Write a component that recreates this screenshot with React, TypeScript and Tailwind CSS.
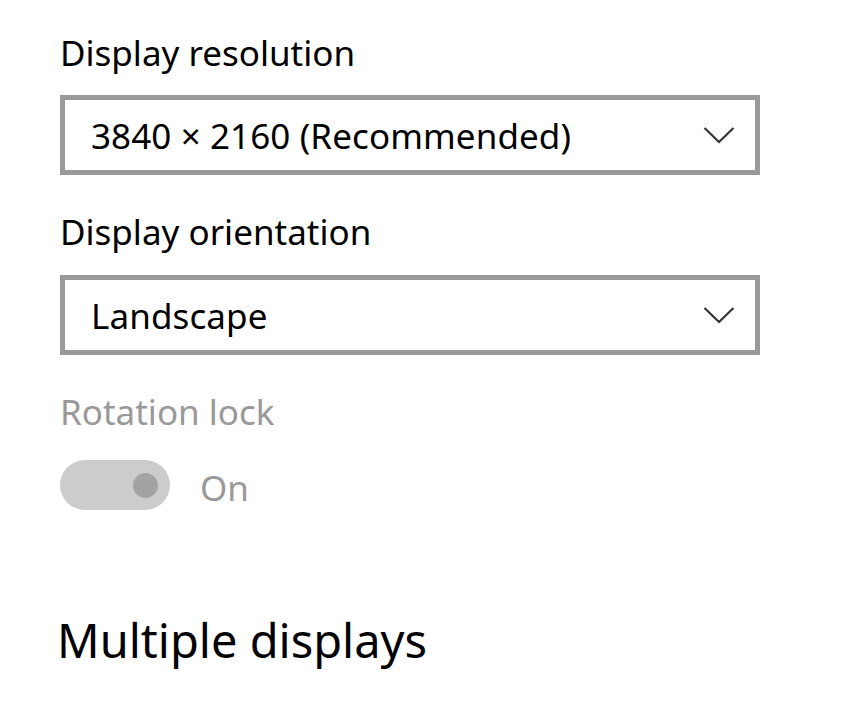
import { useState } from 'react';

const font = { fontFamily: '"Noto Sans", "Open Sans", sans-serif' };

function Chevron() {
  return (
    <svg width="32" height="18" viewBox="0 0 32 18" fill="none" className="shrink-0">
      <path d="M1.5 2 L16 16 L30.5 2" stroke="#333" strokeWidth="2.2" />
    </svg>
  );
}

function Dropdown({ value }: { value: string }) {
  return (
    <div className="flex h-[80px] w-[700px] items-center justify-between border-[5px] border-[#999999] bg-white pl-[26px] pr-[20px]">
      <span className="mt-[2px] text-[35px] leading-[48px] tracking-[0.1px] text-black">{value}</span>
      <Chevron />
    </div>
  );
}

export default function App() {
  const [locked, setLocked] = useState(true);

  return (
    <div className="min-h-[709px] w-[862px] bg-white" style={font}>
      <div className="flex flex-col pl-[60px] pt-[29px]">
        <h3 className="text-[35px] leading-[48px] text-black">Display resolution</h3>
        <div className="mt-[18px]">
          <Dropdown value="3840 × 2160 (Recommended)" />
        </div>

        <h3 className="mt-[33px] text-[35px] leading-[48px] text-black">Display orientation</h3>
        <div className="mt-[19px]">
          <Dropdown value="Landscape" />
        </div>

        <p className="mt-[33px] text-[35px] leading-[48px] text-[#999999]">Rotation lock</p>
        <div className="mt-[22px] flex items-center gap-[30px]">
          <button
            disabled
            onClick={() => setLocked(!locked)}
            className="flex h-[50px] w-[110px] items-center justify-end rounded-full bg-[#cccccc] pr-[12px]"
          >
            <span className="h-[25px] w-[25px] rounded-full bg-[#a3a3a3]" />
          </button>
          <span className="mt-[6px] text-[35px] leading-[48px] text-[#999999]">{locked ? 'On' : 'Off'}</span>
        </div>
      </div>

      <h2 className="mt-[98px] pl-[57px] text-[47px] leading-[60px] text-black">Multiple displays</h2>
    </div>
  );
}
